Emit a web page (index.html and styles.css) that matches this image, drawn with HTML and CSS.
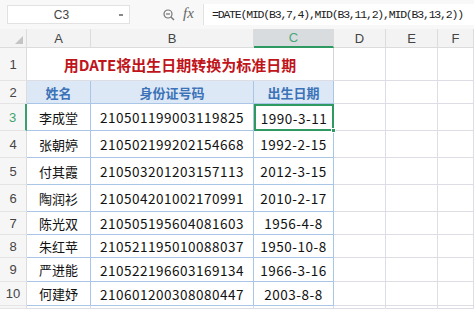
FILE: index.html
```html
<!DOCTYPE html>
<html lang="zh-CN">
<head>
<meta charset="utf-8">
<title>DATE</title>
<link rel="stylesheet" href="styles.css">
</head>
<body>
<div class="app">
  <div class="toolbar">
    <div class="namebox"><span class="ref">C3</span><span class="caret"></span></div>
    <div class="tools">
      <svg class="zoomicon" width="12" height="12" viewBox="0 0 12 12"><circle cx="5" cy="5" r="4" fill="none" stroke="#777" stroke-width="1.2"/><line x1="3" y1="5" x2="7" y2="5" stroke="#777" stroke-width="1.2"/><line x1="8" y1="8" x2="11" y2="11" stroke="#777" stroke-width="1.4"/></svg>
      <span class="fx">fx</span>
    </div>
    <div class="formula">=DATE(MID(B3,7,4),MID(B3,11,2),MID(B3,13,2))</div>
  </div>
  <div class="sheet">
    <div class="corner"><span class="tri"></span></div>
    <div class="colhdr">A</div>
    <div class="colhdr">B</div>
    <div class="colhdr sel">C</div>
    <div class="colhdr">D</div>
    <div class="colhdr">E</div>
    <div class="colhdr">F</div>

    <div class="rowhdr">1</div>
    <div class="cell title">用DATE将出生日期转换为标准日期</div>
    <div class="cell"></div><div class="cell"></div><div class="cell"></div>

    <div class="rowhdr">2</div>
    <div class="cell th">姓名</div>
    <div class="cell th">身份证号码</div>
    <div class="cell th">出生日期</div>
    <div class="cell"></div><div class="cell"></div><div class="cell"></div>

    <div class="rowhdr selrow">3</div>
    <div class="cell td">李成堂</div>
    <div class="cell td num">210501199003119825</div>
    <div class="cell td num active">1990-3-11<span class="handle"></span></div>
    <div class="cell"></div><div class="cell"></div><div class="cell"></div>

    <div class="rowhdr">4</div>
    <div class="cell td">张朝婷</div>
    <div class="cell td num">210502199202154668</div>
    <div class="cell td num">1992-2-15</div>
    <div class="cell"></div><div class="cell"></div><div class="cell"></div>

    <div class="rowhdr">5</div>
    <div class="cell td">付其霞</div>
    <div class="cell td num">210503201203157113</div>
    <div class="cell td num">2012-3-15</div>
    <div class="cell"></div><div class="cell"></div><div class="cell"></div>

    <div class="rowhdr">6</div>
    <div class="cell td">陶润衫</div>
    <div class="cell td num">210504201002170991</div>
    <div class="cell td num">2010-2-17</div>
    <div class="cell"></div><div class="cell"></div><div class="cell"></div>

    <div class="rowhdr">7</div>
    <div class="cell td">陈光双</div>
    <div class="cell td num">210505195604081603</div>
    <div class="cell td num">1956-4-8</div>
    <div class="cell"></div><div class="cell"></div><div class="cell"></div>

    <div class="rowhdr">8</div>
    <div class="cell td">朱红苹</div>
    <div class="cell td num">210521195010088037</div>
    <div class="cell td num">1950-10-8</div>
    <div class="cell"></div><div class="cell"></div><div class="cell"></div>

    <div class="rowhdr">9</div>
    <div class="cell td">严进能</div>
    <div class="cell td num">210522196603169134</div>
    <div class="cell td num">1966-3-16</div>
    <div class="cell"></div><div class="cell"></div><div class="cell"></div>

    <div class="rowhdr">10</div>
    <div class="cell td">何建妤</div>
    <div class="cell td num">210601200308080447</div>
    <div class="cell td num">2003-8-8</div>
    <div class="cell"></div><div class="cell"></div><div class="cell"></div>

    <div class="rowhdr"></div>
    <div class="cell"></div><div class="cell"></div><div class="cell"></div>
    <div class="cell"></div><div class="cell"></div><div class="cell"></div>
  </div>
</div>
</body>
</html>
```
FILE: styles.css
```css
* { box-sizing: border-box; }
html, body { margin: 0; padding: 0; background: #fff; }
body { width: 474px; height: 309px; overflow: hidden; font-family: "Noto Sans CJK SC", "Noto Sans", sans-serif; }

.app { width: 474px; height: 309px; overflow: hidden; }

.toolbar {
  height: 29px;
  display: flex;
  align-items: center;
  background: #f8f8f8;
  padding-left: 7px;
}
.namebox {
  width: 123px;
  height: 19px;
  background: #fff;
  border: 1px solid #e2e2e2;
  display: flex;
  align-items: center;
  font-family: "Liberation Sans", sans-serif;
  font-size: 12px;
  color: #444;
}
.namebox .ref { flex: 1; text-align: center; padding-right: 4px; }
.namebox .caret {
  width: 4px; height: 2px; background: #888; margin-right: 6px;
}
.tools {
  width: 73px;
  display: flex;
  align-items: center;
  padding-left: 33px;
  gap: 8px;
}
.zoomicon { display: block; }
.fx {
  font-family: "Liberation Serif", serif;
  font-style: italic;
  font-size: 15px;
  color: #666;
  line-height: 1;
  margin-top: -2px;
}
.formula {
  flex: 1;
  min-width: 0;
  height: 21px;
  background: #fff;
  border-left: 1px solid #e2e2e2;
  display: flex;
  align-items: center;
  padding-left: 8px;
  font-family: "Liberation Mono", monospace;
  font-size: 11.5px;
  letter-spacing: -1.2px;
  color: #222;
  white-space: nowrap;
  overflow: hidden;
}

.sheet {
  display: grid;
  grid-template-columns: 27px 64px 163px 80px 52px 52px 36px;
  grid-template-rows: 19px 33px 23px 27px 27px 27px 27px 23px 23px 24px 24px 3px;
  width: 474px;
  overflow: hidden;
}
.corner {
  background: #f3f3f3;
  border-right: 1px solid #dcdcdc;
  border-bottom: 1px solid #dcdcdc;
  position: relative;
}
.corner .tri {
  position: absolute;
  right: 3px; bottom: 3px;
  width: 0; height: 0;
  border-left: 8px solid transparent;
  border-bottom: 8px solid #c4c4c4;
}
.colhdr {
  background: #f3f3f3;
  border-right: 1px solid #dcdcdc;
  border-bottom: 1px solid #dcdcdc;
  display: flex; align-items: center; justify-content: center;
  font-family: "Liberation Sans", sans-serif;
  font-size: 13px;
  color: #444;
}
.colhdr.sel {
  background: #d9dcde;
  border-bottom: 2px solid #2e9a62;
  color: #4aa77a;
}
.rowhdr {
  background: #f6f6f6;
  border-right: 1px solid #dcdcdc;
  border-bottom: 1px solid #e4e4e4;
  display: flex; align-items: center; justify-content: center;
  font-family: "Liberation Sans", sans-serif;
  font-size: 13px;
  color: #444;
}
.rowhdr.selrow {
  color: #3fa26f;
  border-right: 2px solid #3aa06b;
}
.cell {
  border-right: 1px solid #dddde6;
  border-bottom: 1px solid #dddde6;
  display: flex; align-items: center; justify-content: center;
  font-size: 13px;
  color: #111;
}
.title {
  grid-column: 2 / span 3;
  color: #c0141b;
  font-weight: bold;
  font-size: 15px;
  border-right: 1px solid #d2d2da;
}
.th {
  background: #dce8f5;
  color: #3b72b8;
  font-weight: bold;
  font-size: 13px;
  border-right: 1px solid #a9c6e6;
  border-bottom: 1px solid #a9c6e6;
}
.td {
  border-right: 1px solid #a9c6e6;
  border-bottom: 1px solid #a9c6e6;
}
.num { font-size: 13.5px; letter-spacing: 0.5px; }
.active {
  position: relative;
  border: 2px solid #2e9a62;
}
.handle {
  position: absolute;
  right: -4px; bottom: -4px;
  width: 5px; height: 5px;
  background: #2e9a62;
  border: 1px solid #fff;
}
```
